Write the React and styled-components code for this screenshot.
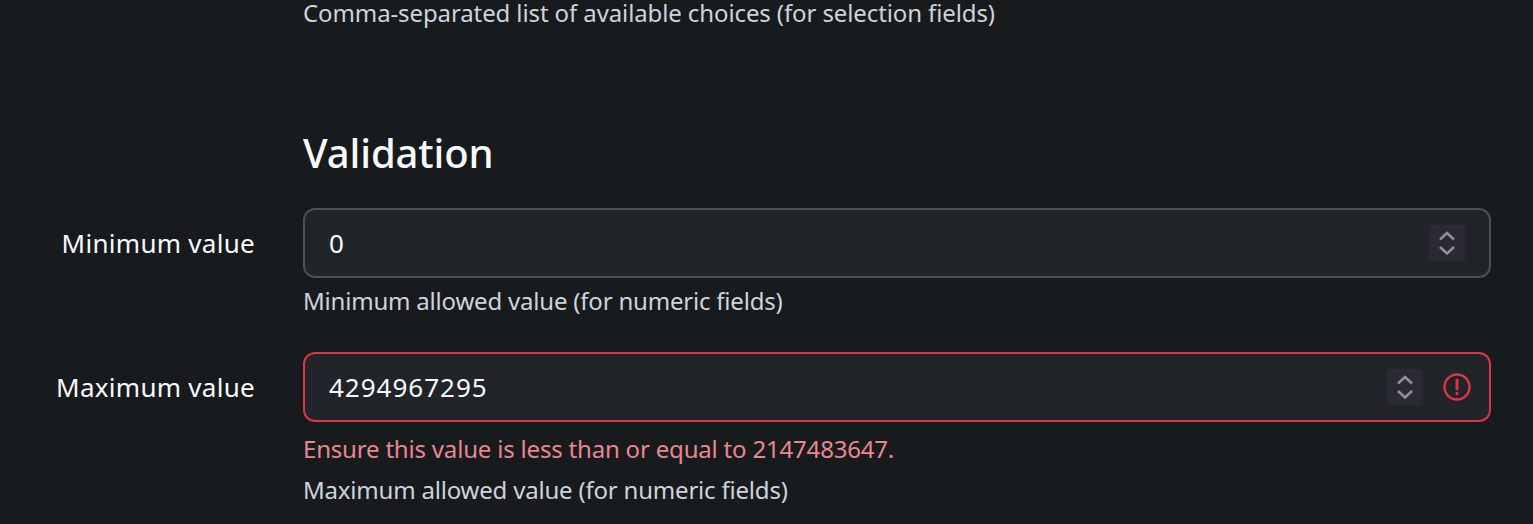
import React from 'react';
import styled, { createGlobalStyle } from 'styled-components';

const GlobalStyle = createGlobalStyle`
  html, body {
    margin: 0;
    height: 100%;
    overflow: hidden;
    background: #181b1e;
  }
  body {
    font-family: 'Noto Sans', 'Open Sans', sans-serif;
  }
`;

const Page = styled.div`
  display: flex;
  flex-direction: column;
  width: 1491px;
  height: 524px;
  overflow: hidden;
`;

const Hint = styled.div`
  margin-left: 303px;
  font-size: 24px;
  line-height: 26px;
  letter-spacing: -0.11px;
  color: #ced4da;
`;

const Heading = styled.h2`
  margin: 104px 0 32px 303px;
  font-size: 40px;
  line-height: 46px;
  font-weight: 500;
  letter-spacing: -0.1px;
  color: #f8f9fa;
`;

const Row = styled.div`
  display: grid;
  grid-template-columns: 255px 1188px;
  column-gap: 48px;
  margin-top: ${(props) => props.$top || 0}px;
`;

const Label = styled.label`
  text-align: right;
  font-size: 26px;
  line-height: 70px;
  letter-spacing: 0.28px;
  color: #f8f9fa;
`;

const Field = styled.div`
  display: flex;
  flex-direction: column;
`;

const InputBox = styled.div`
  box-sizing: border-box;
  display: flex;
  align-items: center;
  height: 70px;
  padding: 0 24px;
  background: #212429;
  border: 2px solid ${(props) => (props.$invalid ? '#dc3545' : '#495057')};
  border-radius: 12px;
`;

const Value = styled.span`
  flex: 1;
  font-size: 26px;
  letter-spacing: 1px;
  color: #f8f9fa;
`;

const Spinner = styled.span`
  display: flex;
  align-items: center;
  justify-content: center;
  width: 36px;
  height: 36px;
  background: #2b2a33;
`;

const StatusIcon = styled.span`
  display: flex;
  margin-left: 20px;
  margin-right: -6px;
`;

const ErrorText = styled.div`
  margin: 10px 0 1px;
  font-size: 24px;
  line-height: 34px;
  letter-spacing: -0.19px;
  color: #ea868f;
`;

const FieldHint = styled.div`
  margin-top: 6px;
  font-size: 24px;
  line-height: 34px;
  letter-spacing: -0.2px;
  color: #ced4da;
`;

const SpinnerIcon = () => (
  <svg width="18" height="26" viewBox="0 0 18 26" fill="none" stroke="#8f8f9d" strokeWidth="2.6">
    <path d="M2 9.5 9 3l7 6.5" />
    <path d="M2 17 9 23.5l7-6.5" />
  </svg>
);

const AlertIcon = () => (
  <svg width="28" height="28" viewBox="0 0 28 28" fill="none">
    <circle cx="14" cy="14" r="12.5" stroke="#dc3545" strokeWidth="2.4" />
    <path d="M14 7v9" stroke="#dc3545" strokeWidth="3" strokeLinecap="round" />
    <circle cx="14" cy="20.5" r="1.7" fill="#dc3545" />
  </svg>
);

export default function App() {
  return (
    <Page>
      <GlobalStyle />
      <Hint>Comma-separated list of available choices (for selection fields)</Hint>
      <Heading>Validation</Heading>
      <Row>
        <Label>Minimum value</Label>
        <Field>
          <InputBox>
            <Value>0</Value>
            <Spinner><SpinnerIcon /></Spinner>
          </InputBox>
          <FieldHint>Minimum allowed value (for numeric fields)</FieldHint>
        </Field>
      </Row>
      <Row $top={34}>
        <Label>Maximum value</Label>
        <Field>
          <InputBox $invalid>
            <Value>4294967295</Value>
            <Spinner><SpinnerIcon /></Spinner>
            <StatusIcon><AlertIcon /></StatusIcon>
          </InputBox>
          <ErrorText>Ensure this value is less than or equal to 2147483647.</ErrorText>
          <FieldHint>Maximum allowed value (for numeric fields)</FieldHint>
        </Field>
      </Row>
    </Page>
  );
}
